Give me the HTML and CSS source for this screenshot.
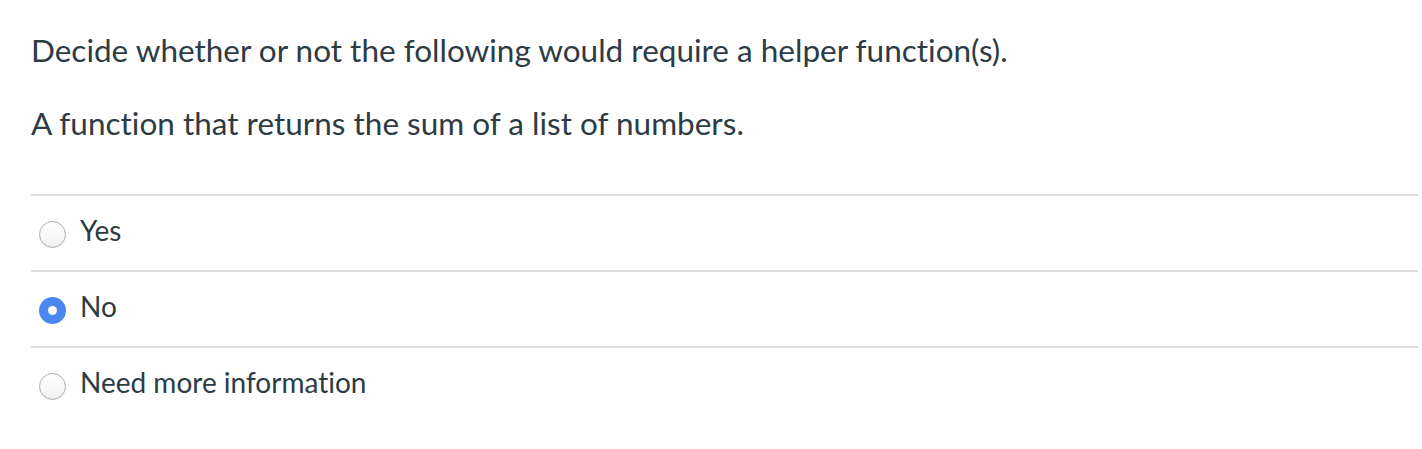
FILE: index.html
```html
<!DOCTYPE html>
<html>
<head>
<meta charset="utf-8">
<link rel="stylesheet" href="styles.css">
</head>
<body>
<div class="question">
  <div class="question-text">
    <p class="prompt">Decide whether or not the following would require a helper function(s).</p>
    <p class="prompt">A function that returns the sum of a list of numbers.</p>
  </div>
  <div class="answers">
    <label class="answer">
      <span class="radio"></span>
      <span class="answer-label">Yes</span>
    </label>
    <label class="answer">
      <span class="radio checked"></span>
      <span class="answer-label">No</span>
    </label>
    <label class="answer last">
      <span class="radio"></span>
      <span class="answer-label">Need more information</span>
    </label>
  </div>
</div>
</body>
</html>
```

FILE: styles.css
```css
html, body {
  margin: 0;
  padding: 0;
  background: #ffffff;
}

body {
  font-family: Lato, "Open Sans", "Liberation Sans", sans-serif;
  color: #2d3b45;
  font-variant-ligatures: none;
}

.question {
  padding: 0 4px 0 31px;
}

.question-text {
  display: flex;
  flex-direction: column;
  gap: 37px;
  padding-top: 32px;
}

.prompt {
  margin: 0;
  font-size: 31.5px;
  line-height: 36px;
}

.answers {
  margin-top: 53px;
}

.answer {
  display: flex;
  align-items: flex-start;
  height: 74px;
  border-top: 2px solid #dddddd;
}

.radio {
  box-sizing: border-box;
  width: 27px;
  height: 27px;
  margin: 25px 0 0 8px;
  border-radius: 50%;
  border: 1px solid #aeaeae;
  background: linear-gradient(#ffffff, #f2f2f2);
  box-shadow: inset 0 -1px 1px rgba(0,0,0,0.06);
  flex: none;
  position: relative;
}

.radio.checked {
  border: none;
  background: #4a87ee;
  box-shadow: none;
}

.radio.checked::after {
  content: "";
  position: absolute;
  left: 50%;
  top: 50%;
  width: 9px;
  height: 9px;
  margin: -4.5px 0 0 -4.5px;
  border-radius: 50%;
  background: #ffffff;
}

.answer-label {
  margin: 17px 0 0 14px;
  font-size: 28px;
  line-height: 34px;
}
```
